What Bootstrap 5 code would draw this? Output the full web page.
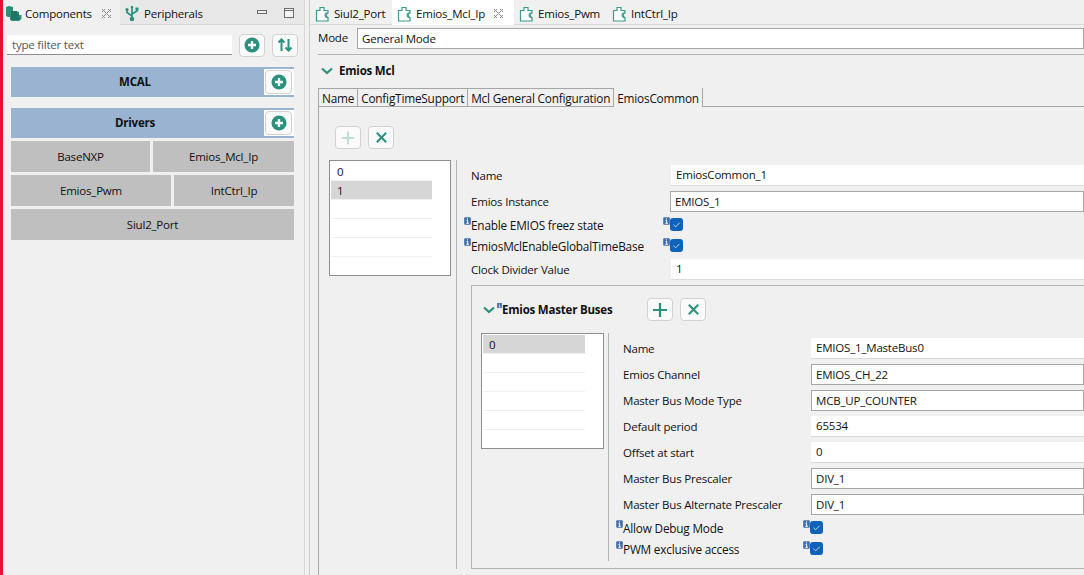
<!DOCTYPE html>
<html lang="en">
<head>
<meta charset="utf-8">
<title>Emios_Mcl_Ip</title>
<link href="https://cdn.jsdelivr.net/npm/bootstrap@5.3.0/dist/css/bootstrap.min.css" rel="stylesheet">
<style>
html,body{height:575px;overflow:hidden}
body{background:#f0f0f0;color:#111;font:11.5px/16px "Open Sans","Noto Sans",sans-serif;letter-spacing:-.2px}
.app{height:575px;border-left:3px solid #e3142a}
.leftpane{width:302px;flex:none;border-right:1px solid #d8d8d8}
.rightpane{margin-left:4px;flex:1 1 auto;min-width:0;border-left:1px solid #cfcfcf;overflow:hidden}
.tabbar{height:25px;background:#e8e8e8;border-bottom:1px solid #d8d8d8}
.vtab{height:25px;padding:3px 5px 0;white-space:nowrap}
.vtab.on{background:#f0f0f0;border-bottom:1px solid #f0f0f0;padding-top:4px}
.rightpane .vtab.on{background:#fff;border-bottom:1px solid #fff}
.rightpane .tabbar{background:#f0f0f0}
.filter{width:225px;height:20px;background:#fff;border:0;border-bottom:1px solid #8e8e8e;padding:0 5px;color:#555;line-height:19px}
.tbtn{width:26px;height:23px;border:1px solid #d2d2d2;border-radius:4px;background:#fafafa;padding:0;flex:none}
.tbtn.off svg{opacity:.28}
.headbar{height:30px;background:#9ab3d1;font-weight:700;color:#111;position:relative;padding-right:35px}
.headbtn{position:absolute;right:0;top:2px;width:30px;height:26px;background:#fff;padding:1px}
.headbtn .tbtn{width:27px;height:24px;display:flex;align-items:center;justify-content:center}
.chip{height:31px;background:#bfbfbf}
.field{height:21px;background:#fff;padding:0 5px;line-height:19px;white-space:nowrap;flex:1 1 auto;min-width:0}
.field.boxed{border:1px solid #a6a6a6;padding:0 4px}
.field.flat{border-bottom:1px solid #dadada}
.lbl{white-space:nowrap;flex:none}
.modeline{height:29px;padding-left:8px;padding-top:3px}
.modeline .lbl{width:39px}
.rule{border-top:1px solid #b4b4b4;margin-left:8px;height:0}
.sect{font-weight:700}
.ttabs{height:19px;margin-left:8px;border-bottom:1px solid #a6a6a6}
.ttab{padding:1px 3px 0;border:1px solid #a6a6a6;border-bottom:0;height:19px;line-height:17px;white-space:nowrap;font-size:11.8px}
.ttab+.ttab{margin-left:-1px}
.ttab.on{background:#f0f0f0;margin-bottom:-1px;border-left:0;border-top:0;padding-top:2px;margin-left:0}
.tbody{margin-left:8px;border-left:1px solid #a6a6a6;height:469px;padding:19px 0 0 16px}
.mlist{background:#fff;border:1px solid #8e8e8e;width:122px;height:116px;flex:none;padding:1px}
.mrow{height:19px;padding:1px 6px 0;border-bottom:1px solid #f0f0f0;margin-right:17px;line-height:17px}
.mrow.sel{background:#d6d6d6}
.sep{width:1px;background:#b4b4b4;flex:none;margin-left:5px;margin-right:14px}
.fr{display:flex;align-items:center}
.bnd{border:1px solid #b4b4b4;border-right:0;height:284px;padding:0 0 0 9px}
.inf{flex:none;display:block}
.checkrow{position:relative}
.checkrow>.inf{position:absolute;top:3px}
.checkrow>.lbl{padding-top:1px;font-size:11.8px}
</style>
</head>
<body>
<svg width="0" height="0" class="d-block position-absolute">
<defs>
<symbol id="plus" viewBox="0 0 18 18"><circle cx="9" cy="9" r="8.5" fill="#2b917d"/><path d="M9 4.500v9M4.500 9h9" stroke="#fff" stroke-width="2.600"/></symbol>
<symbol id="x" viewBox="0 0 16 16"><path d="M3 3l10 10M13 3L3 13" stroke="#2b917d" stroke-width="2.200" fill="none"/></symbol>
<symbol id="add" viewBox="0 0 18 18"><path d="M9 2v14M2 9h14" stroke="#2b917d" stroke-width="2.200" fill="none"/></symbol>
<symbol id="sort" viewBox="0 0 16 16"><path d="M4.500 14V2.500M1.500 5.500l3-3 3 3M11.500 2v11.500M8.500 10.500l3 3 3-3" stroke="#2b917d" stroke-width="2" fill="none"/></symbol>
<symbol id="page" viewBox="0 0 16 16"><path d="M1.500 15V4.500h3.500V1.500h4v3H13V7a2.300 2.300 0 0 0 0 4.500V15z" fill="#fff" stroke="#3a9b88" stroke-width="1.200"/><path d="M13 6.800a2.400 2.400 0 1 0 0 4.700" fill="none" stroke="#3a9b88" stroke-width="1.200"/></symbol>
<symbol id="inf" viewBox="0 0 7 8"><rect x=".2" y=".2" width="6.600" height="7.600" rx="1" fill="#3f6da8"/><path d="M3.500 1.300v1.200M2.500 3.500h1.200v2.500M2.300 6.300h2.600" stroke="#fff" stroke-width="1" fill="none"/></symbol>
<symbol id="tick" viewBox="0 0 13 13"><rect width="13" height="13" rx="3" fill="#0f62ba"/><path d="M3.500 6.800l2.200 2 3.800-4" stroke="#bcd6f2" stroke-width="1" fill="none"/></symbol>
</defs>
</svg>

<div class="app d-flex">
  <aside class="leftpane">
    <div class="tabbar d-flex align-items-center">
      <div class="vtab on d-flex align-items-center" style="width:117px;padding-left:2px">
        <svg class="flex-shrink-0" width="17" height="17" viewBox="0 0 17 17"><path d="M1 2l3-1 4 1v4h3l3 1v3h2.500v4L14 16H7l-2-1v-3H3l-2-1z" fill="#2f8f7c"/><path d="M6 6h6v2.500h2V15H7l-1-1z" fill="#1f7664"/></svg>
        <span style="margin-left:3px">Components</span>
        <svg class="flex-shrink-0" style="margin-left:9px" width="11" height="11" viewBox="0 0 11 11"><path d="M1 1l9 9M10 1l-9 9M1 4l3-3M7 1l3 3M1 7l3 3M7 10l3-3" stroke="#8b8b8b" stroke-width="1" fill="none"/></svg>
      </div>
      <div class="vtab d-flex align-items-center" style="gap:5px">
        <svg class="flex-shrink-0" width="14" height="17" viewBox="0 0 14 17"><path d="M7 1v13M7 11L2 7.500V5M7 9l5-3V4" stroke="#2b917d" stroke-width="1.700" fill="none"/><circle cx="7" cy="14" r="2.300" fill="#2b917d"/><circle cx="2" cy="4.500" r="1.600" fill="#2b917d"/><rect x="10.500" y="2.500" width="3" height="3" fill="#2b917d"/><path d="M5.500 3L7 .5 8.500 3z" fill="#2b917d"/></svg>
        <span>Peripherals</span>
      </div>
      <div class="ms-auto d-flex align-items-center" style="gap:17px;padding-right:10px;padding-top:1px">
        <svg width="10" height="5" viewBox="0 0 10 5"><rect x=".5" y=".5" width="9" height="3" fill="#f0f0f0" stroke="#6a6a6a"/></svg>
        <svg width="10" height="10" viewBox="0 0 10 10"><rect x=".5" y=".5" width="9" height="9" fill="#f4f4f4" stroke="#6a6a6a"/><path d="M0 2.500h10" stroke="#6a6a6a"/></svg>
      </div>
    </div>
    <div class="d-flex align-items-center" style="padding:8px 0 0 4px;height:32px">
      <div class="filter">type filter text</div>
      <button class="tbtn d-flex align-items-center justify-content-center" style="margin-left:7px" type="button"><svg width="16" height="16"><use href="#plus"/></svg></button>
      <button class="tbtn d-flex align-items-center justify-content-center" style="margin-left:7px" type="button"><svg width="16" height="16"><use href="#sort"/></svg></button>
    </div>
    <div style="padding:10px 10px 0 8px">
      <div class="headbar d-flex align-items-center justify-content-center">MCAL
        <div class="headbtn"><div class="tbtn"><svg width="16" height="16"><use href="#plus"/></svg></div></div>
      </div>
      <div class="headbar d-flex align-items-center justify-content-center" style="margin-top:11px">Drivers
        <div class="headbtn"><div class="tbtn"><svg width="16" height="16"><use href="#plus"/></svg></div></div>
      </div>
      <div class="d-flex" style="gap:3px;margin-top:3px">
        <div class="chip d-flex align-items-center justify-content-center" style="width:139px">BaseNXP</div>
        <div class="chip d-flex align-items-center justify-content-center flex-grow-1">Emios_Mcl_Ip</div>
      </div>
      <div class="d-flex" style="gap:3px;margin-top:3px">
        <div class="chip d-flex align-items-center justify-content-center" style="width:160px">Emios_Pwm</div>
        <div class="chip d-flex align-items-center justify-content-center flex-grow-1">IntCtrl_Ip</div>
      </div>
      <div class="chip d-flex align-items-center justify-content-center" style="margin-top:3px">Siul2_Port</div>
    </div>
  </aside>

  <main class="rightpane">
    <div class="tabbar d-flex align-items-center">
      <div class="vtab d-flex align-items-center" style="width:82px;gap:3px"><svg class="flex-shrink-0" width="16" height="16"><use href="#page"/></svg><span>Siul2_Port</span></div>
      <div class="vtab on d-flex align-items-center" style="width:122px;gap:3px"><svg class="flex-shrink-0" width="16" height="16"><use href="#page"/></svg><span>Emios_Mcl_Ip</span>
        <svg class="flex-shrink-0" style="margin-left:5px" width="11" height="11" viewBox="0 0 11 11"><path d="M1 1l9 9M10 1l-9 9M1 4l3-3M7 1l3 3M1 7l3 3M7 10l3-3" stroke="#8b8b8b" stroke-width="1" fill="none"/></svg></div>
      <div class="vtab d-flex align-items-center" style="width:93px;gap:3px"><svg class="flex-shrink-0" width="16" height="16"><use href="#page"/></svg><span>Emios_Pwm</span></div>
      <div class="vtab d-flex align-items-center" style="gap:3px"><svg class="flex-shrink-0" width="16" height="16"><use href="#page"/></svg><span>IntCtrl_Ip</span></div>
    </div>
    <div class="modeline d-flex align-items-start">
      <div class="lbl" style="padding-top:2px">Mode</div>
      <div class="field boxed">General Mode</div>
    </div>
    <div class="rule"></div>
    <div class="d-flex align-items-center sect" style="height:22px;margin-top:5px;padding-left:11px;gap:6px">
      <svg width="12" height="8" viewBox="0 0 12 8"><path d="M1 1.500L6 6l5-4.500" stroke="#2b917d" stroke-width="2.200" fill="none"/></svg>
      <span>Emios Mcl</span>
    </div>
    <div class="ttabs d-flex" style="margin-top:6px">
      <div class="ttab">Name</div>
      <div class="ttab">ConfigTimeSupport</div>
      <div class="ttab">Mcl General Configuration</div>
      <div class="ttab on">EmiosCommon</div>
    </div>
    <div class="tbody">
      <div class="d-flex" style="gap:7px;height:23px">
        <div class="tbtn off d-flex align-items-center justify-content-center"><svg width="16" height="16"><use href="#add"/></svg></div>
        <div class="tbtn d-flex align-items-center justify-content-center"><svg width="15" height="15"><use href="#x"/></svg></div>
      </div>
      <div class="d-flex" style="margin-top:11px;margin-left:-6px">
        <div class="mlist">
          <div class="mrow">0</div><div class="mrow sel">1</div><div class="mrow"></div><div class="mrow"></div><div class="mrow"></div>
        </div>
        <div class="sep"></div>
        <div class="flex-grow-1" style="min-width:0;padding-top:5px">
          <div class="fr" style="height:21px"><div class="lbl" style="width:200px">Name</div><div class="field flat">EmiosCommon_1</div></div>
          <div class="fr" style="height:21px;margin-top:5px"><div class="lbl" style="width:199px">Emios Instance</div><div class="field boxed">EMIOS_1</div></div>
          <div class="fr checkrow" style="height:20px;margin-top:2px"><svg class="inf" style="left:-7px" width="7" height="8"><use href="#inf"/></svg><div class="lbl" style="width:199px">Enable EMIOS freez state</div><svg class="inf" style="left:192px" width="7" height="8"><use href="#inf"/></svg><svg width="13" height="13"><use href="#tick"/></svg></div>
          <div class="fr checkrow" style="height:20px;margin-top:1px"><svg class="inf" style="left:-7px" width="7" height="8"><use href="#inf"/></svg><div class="lbl" style="width:199px">EmiosMclEnableGlobalTimeBase</div><svg class="inf" style="left:192px" width="7" height="8"><use href="#inf"/></svg><svg width="13" height="13"><use href="#tick"/></svg></div>
          <div class="fr" style="height:21px;margin-top:4px"><div class="lbl" style="width:200px">Clock Divider Value</div><div class="field flat">1</div></div>
          <div class="bnd" style="margin-top:5px">
            <div class="d-flex align-items-center sect" style="height:23px;margin-top:12px">
              <svg class="flex-shrink-0" width="12" height="8" viewBox="0 0 12 8" style="margin-left:2px"><path d="M1 1.500L6 6l5-4.500" stroke="#2b917d" stroke-width="2.200" fill="none"/></svg>
              <svg class="flex-shrink-0" width="5" height="7" viewBox="0 0 7 8" style="margin-top:-9px;margin-left:2px"><use href="#inf"/></svg>
              <span style="width:145px;flex:none">Emios Master Buses</span>
              <div class="tbtn d-flex align-items-center justify-content-center"><svg width="18" height="18"><use href="#add"/></svg></div>
              <div class="tbtn d-flex align-items-center justify-content-center" style="margin-left:7px"><svg width="15" height="15"><use href="#x"/></svg></div>
            </div>
            <div class="d-flex" style="margin-top:12px">
              <div class="mlist" style="width:123px">
                <div class="mrow sel">0</div><div class="mrow"></div><div class="mrow"></div><div class="mrow"></div><div class="mrow"></div>
              </div>
              <div class="sep" style="margin-left:4px;height:228px"></div>
              <div class="flex-grow-1" style="min-width:0;padding-top:5px">
                <div class="fr" style="height:21px"><div class="lbl" style="width:188px">Name</div><div class="field flat">EMIOS_1_MasteBus0</div></div>
                <div class="fr" style="height:21px;margin-top:5px"><div class="lbl" style="width:188px">Emios Channel</div><div class="field boxed">EMIOS_CH_22</div></div>
                <div class="fr" style="height:21px;margin-top:5px"><div class="lbl" style="width:188px">Master Bus Mode Type</div><div class="field boxed">MCB_UP_COUNTER</div></div>
                <div class="fr" style="height:21px;margin-top:5px"><div class="lbl" style="width:188px">Default period</div><div class="field flat">65534</div></div>
                <div class="fr" style="height:21px;margin-top:5px"><div class="lbl" style="width:188px">Offset at start</div><div class="field flat">0</div></div>
                <div class="fr" style="height:21px;margin-top:5px"><div class="lbl" style="width:188px">Master Bus Prescaler</div><div class="field boxed">DIV_1</div></div>
                <div class="fr" style="height:21px;margin-top:5px"><div class="lbl" style="width:188px">Master Bus Alternate Prescaler</div><div class="field boxed">DIV_1</div></div>
                <div class="fr checkrow" style="height:20px;margin-top:2px"><svg class="inf" style="left:-7px" width="7" height="8"><use href="#inf"/></svg><div class="lbl" style="width:187px">Allow Debug Mode</div><svg class="inf" style="left:180px" width="7" height="8"><use href="#inf"/></svg><svg width="13" height="13"><use href="#tick"/></svg></div>
                <div class="fr checkrow" style="height:20px;margin-top:1px"><svg class="inf" style="left:-7px" width="7" height="8"><use href="#inf"/></svg><div class="lbl" style="width:187px">PWM exclusive access</div><svg class="inf" style="left:180px" width="7" height="8"><use href="#inf"/></svg><svg width="13" height="13"><use href="#tick"/></svg></div>
              </div>
            </div>
          </div>
        </div>
      </div>
    </div>
  </main>
</div>
</body>
</html>
